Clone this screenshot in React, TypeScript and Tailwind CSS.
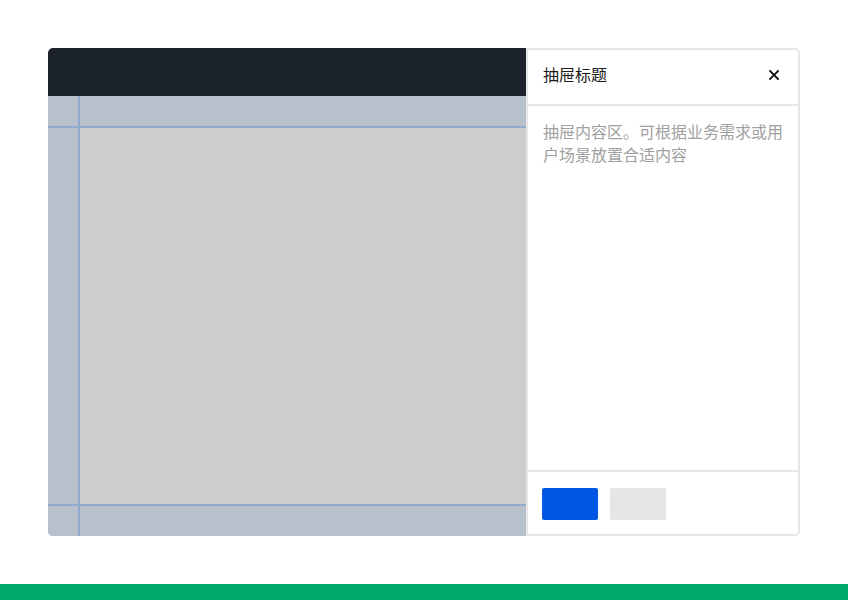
import React from "react";

export default function App() {
  return (
    <div className="w-[848px] h-[600px] bg-white flex flex-col" style={{ fontFamily: '"Noto Sans CJK SC", "Noto Sans", sans-serif' }}>
      <div className="flex-1 pt-12 px-12">
        <div className="flex h-[488px] w-[752px]">
          <div className="w-[478px] flex flex-col rounded-l-[5px] overflow-hidden">
            <div className="h-12 bg-[#1d232c]" />
            <div className="flex-1 grid grid-cols-[30px_1fr] grid-rows-[30px_1fr_30px] gap-[2px] bg-[#8fa9cf]">
              <div className="bg-[#b8c0cc]" />
              <div className="bg-[#b8c0cc]" />
              <div className="bg-[#b8c0cc]" />
              <div className="bg-[#cecece]" />
              <div className="bg-[#b8c0cc]" />
              <div className="bg-[#b8c0cc]" />
            </div>
          </div>
          <div className="w-[274px] flex flex-col border-2 border-[#e6e6e6] rounded-r-[5px] bg-white">
            <div className="h-[56px] flex items-start justify-between pl-[15px] pr-[19px] pt-[12px] border-b-2 border-[#e6e6e6]">
              <span className="text-[16px] leading-[24px] text-[#1a1a1a]">抽屉标题</span>
              <svg width="10" height="10" viewBox="0 0 10 10" className="mt-[8px]">
                <path d="M1 1L9 9M9 1L1 9" stroke="#111" strokeWidth="1.8" strokeLinecap="square" />
              </svg>
            </div>
            <div className="flex-1 px-[15px] pt-[14px]">
              <p className="text-[16px] leading-[23px] text-[#a0a0a0]">
                抽屉内容区。可根据业务需求或用户场景放置合适内容
              </p>
            </div>
            <div className="h-[64px] border-t-2 border-[#e6e6e6] flex items-start gap-3 pl-[14px] pt-[16px]">
              <div className="w-14 h-8 rounded-[2px] bg-[#0057e4]" />
              <div className="w-14 h-8 rounded-[2px] bg-[#e5e5e5]" />
            </div>
          </div>
        </div>
      </div>
      <div className="h-4 bg-[#00aa6b]" />
    </div>
  );
}
